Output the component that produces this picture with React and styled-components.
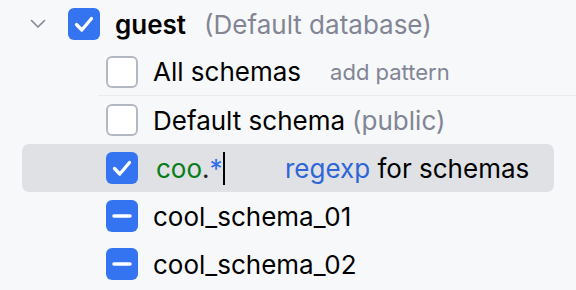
import React from "react";
import styled, { createGlobalStyle } from "styled-components";

const Global = createGlobalStyle`
  html, body { margin: 0; padding: 0; background: #f7f8fa; }
  body { font-family: Inter, "Noto Sans", sans-serif; color: #000; }
`;

const Tree = styled.div`
  width: 576px;
  height: 290px;
  overflow: hidden;
  background: #f7f8fa;
`;

const Row = styled.div`
  display: flex;
  align-items: center;
  height: ${(p) => p.$h || 48}px;
  padding-left: ${(p) => p.$indent}px;
  font-size: 26px;
  white-space: nowrap;
`;

const SelectedRow = styled(Row)`
  margin: 0 22px;
  padding-left: ${(p) => p.$indent - 22}px;
  background: #dfe1e5;
  border-radius: 7px;
`;

const Separator = styled.div`
  margin-left: 98px;
  height: 1px;
  background: #ebecf0;
`;

const ChevronBox = styled.span`
  display: inline-flex;
  width: 16px;
  margin-right: 22px;
`;

const Box = styled.span`
  flex: none;
  width: 32px;
  height: 32px;
  box-sizing: border-box;
  border-radius: 6px;
  margin-right: 15px;
  display: inline-flex;
  align-items: center;
  justify-content: center;
  background: ${(p) => (p.$on ? "#3574f0" : "#ffffff")};
  border: ${(p) => (p.$on ? "none" : "2px solid #b4b8c2")};
`;

const Label = styled.span`
  font-weight: ${(p) => (p.$bold ? 600 : 400)};
  color: #000;
`;

const Muted = styled.span`
  color: #818594;
  margin-left: ${(p) => p.$gap || 0}px;
  font-size: ${(p) => p.$size || 26}px;
`;

const InputArea = styled.span`
  display: inline-flex;
  align-items: center;
  width: 129px;
  padding-left: 3px;
`;

const Green = styled.span`
  color: #067d17;
`;
const Blue = styled.span`
  color: ${(p) => p.$c || "#2f66d6"};
`;
const Dot = styled.span`
  color: #1e1f22;
`;

const Caret = styled.span`
  display: inline-block;
  width: 2px;
  height: 33px;
  background: #000;
  margin-left: 0px;
`;

const Chevron = () => (
  <svg width="16" height="10" viewBox="0 0 16 10" fill="none">
    <path d="M1.5 1.5 L8 8 L14.5 1.5" stroke="#818594" strokeWidth="1.6" strokeLinecap="round" strokeLinejoin="round" />
  </svg>
);

const Check = ({ state }) => {
  if (state === "checked")
    return (
      <Box $on>
        <svg width="32" height="32" viewBox="0 0 32 32" fill="none">
          <path d="M8.5 16.5 L13.8 22 L23.5 10.5" stroke="#fff" strokeWidth="3.3" strokeLinecap="round" strokeLinejoin="round" />
        </svg>
      </Box>
    );
  if (state === "mixed")
    return (
      <Box $on>
        <svg width="32" height="32" viewBox="0 0 32 32" fill="none">
          <path d="M8 16 L24 16" stroke="#fff" strokeWidth="3.6" strokeLinecap="round" />
        </svg>
      </Box>
    );
  return <Box />;
};

export default function App() {
  return (
    <>
      <Global />
      <Tree>
        <Row $indent={30} $h={48}>
          <ChevronBox>
            <Chevron />
          </ChevronBox>
          <Check state="checked" />
          <Label $bold>guest</Label>
          <Muted $gap={18}>(Default database)</Muted>
        </Row>
        <Row $indent={106} $h={47}>
          <Check />
          <Label>All schemas</Label>
          <Muted $gap={29} $size={22}>add pattern</Muted>
        </Row>
        <Separator />
        <Row $indent={106} $h={48}>
          <Check />
          <Label>Default schema</Label>
          <Muted $gap={7}>(public)</Muted>
        </Row>
        <SelectedRow $indent={106} $h={48}>
          <Check state="checked" />
          <InputArea>
            <Green>coo</Green>
            <Dot>.</Dot>
            <Blue $c="#2f6bea">*</Blue>
            <Caret />
          </InputArea>
          <Blue>regexp</Blue>
          <Label>&nbsp;for schemas</Label>
        </SelectedRow>
        <Row $indent={106} $h={48}>
          <Check state="mixed" />
          <Label>cool_schema_01</Label>
        </Row>
        <Row $indent={106} $h={48}>
          <Check state="mixed" />
          <Label>cool_schema_02</Label>
        </Row>
      </Tree>
    </>
  );
}
